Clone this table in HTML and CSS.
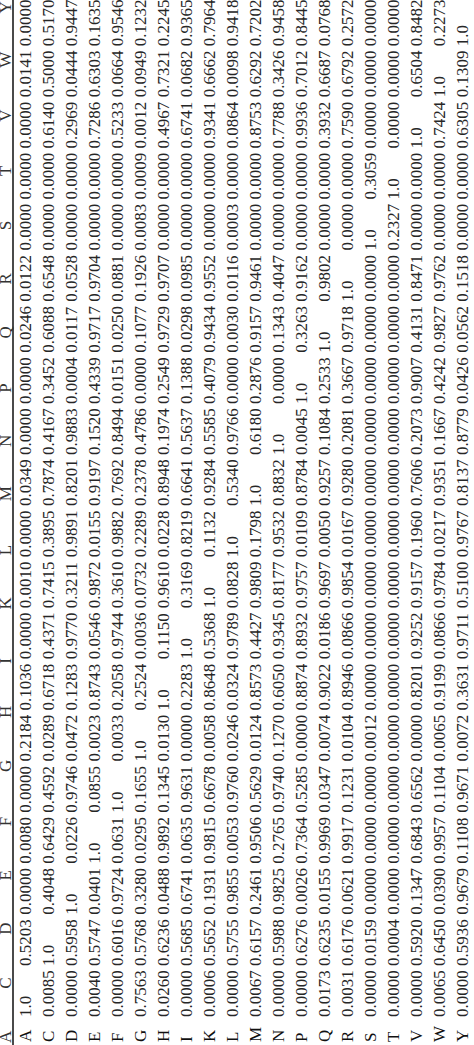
FILE: index.html
```html
<!DOCTYPE html>
<html lang="en">
<head>
<meta charset="utf-8">
<title>Similarity matrix</title>
<link rel="stylesheet" href="styles.css">
</head>
<body>
<div class="page">
  <div class="sheet">
    <div class="head">
      <span>A</span><span>C</span><span>D</span><span>E</span><span>F</span><span>G</span><span>H</span><span>I</span><span>K</span><span>L</span><span>M</span><span>N</span><span>P</span><span>Q</span><span>R</span><span>S</span><span>T</span><span>V</span><span>W</span><span>Y</span>
    </div>
    <div class="rows">
      <div class="row"><span class="lab">A</span><span>1.0</span><span>0.5203</span><span>0.0000</span><span>0.0080</span><span>0.0000</span><span>0.2184</span><span>0.1036</span><span>0.0000</span><span>0.0010</span><span>0.0000</span><span>0.0349</span><span>0.0000</span><span>0.0000</span><span>0.0246</span><span>0.0122</span><span>0.0000</span><span>0.0000</span><span>0.0000</span><span>0.0141</span><span>0.0000</span></div>
      <div class="row"><span class="lab">C</span><span>0.0085</span><span>1.0</span><span>0.4048</span><span>0.6429</span><span>0.4592</span><span>0.0289</span><span>0.6718</span><span>0.4371</span><span>0.7415</span><span>0.3895</span><span>0.7874</span><span>0.4167</span><span>0.3452</span><span>0.6088</span><span>0.6548</span><span>0.0000</span><span>0.0000</span><span>0.6140</span><span>0.5000</span><span>0.5170</span></div>
      <div class="row"><span class="lab">D</span><span>0.0000</span><span>0.5958</span><span>1.0</span><span>0.0226</span><span>0.9746</span><span>0.0472</span><span>0.1283</span><span>0.9770</span><span>0.3211</span><span>0.9891</span><span>0.8201</span><span>0.9883</span><span>0.0004</span><span>0.0117</span><span>0.0528</span><span>0.0000</span><span>0.0000</span><span>0.2969</span><span>0.0444</span><span>0.9447</span></div>
      <div class="row"><span class="lab">E</span><span>0.0040</span><span>0.5747</span><span>0.0401</span><span>1.0</span><span>0.0855</span><span>0.0023</span><span>0.8743</span><span>0.0546</span><span>0.9872</span><span>0.0155</span><span>0.9197</span><span>0.1520</span><span>0.4339</span><span>0.9717</span><span>0.9704</span><span>0.0000</span><span>0.0000</span><span>0.7286</span><span>0.6303</span><span>0.1635</span></div>
      <div class="row"><span class="lab">F</span><span>0.0000</span><span>0.6016</span><span>0.9724</span><span>0.0631</span><span>1.0</span><span>0.0033</span><span>0.2058</span><span>0.9744</span><span>0.3610</span><span>0.9882</span><span>0.7692</span><span>0.8494</span><span>0.0151</span><span>0.0250</span><span>0.0881</span><span>0.0000</span><span>0.0000</span><span>0.5233</span><span>0.0664</span><span>0.9546</span></div>
      <div class="row"><span class="lab">G</span><span>0.7563</span><span>0.5768</span><span>0.3280</span><span>0.0295</span><span>0.1655</span><span>1.0</span><span>0.2524</span><span>0.0036</span><span>0.0732</span><span>0.2289</span><span>0.2378</span><span>0.4786</span><span>0.0000</span><span>0.1077</span><span>0.1926</span><span>0.0083</span><span>0.0009</span><span>0.0012</span><span>0.0949</span><span>0.1232</span></div>
      <div class="row"><span class="lab">H</span><span>0.0260</span><span>0.6236</span><span>0.0488</span><span>0.9892</span><span>0.1345</span><span>0.0130</span><span>1.0</span><span>0.1150</span><span>0.9610</span><span>0.0228</span><span>0.8948</span><span>0.1974</span><span>0.2549</span><span>0.9729</span><span>0.9707</span><span>0.0000</span><span>0.0000</span><span>0.4967</span><span>0.7321</span><span>0.2245</span></div>
      <div class="row"><span class="lab">I</span><span>0.0000</span><span>0.5685</span><span>0.6741</span><span>0.0635</span><span>0.9631</span><span>0.0000</span><span>0.2283</span><span>1.0</span><span>0.3169</span><span>0.8219</span><span>0.6641</span><span>0.5637</span><span>0.1388</span><span>0.0298</span><span>0.0985</span><span>0.0000</span><span>0.0000</span><span>0.6741</span><span>0.0682</span><span>0.9365</span></div>
      <div class="row"><span class="lab">K</span><span>0.0006</span><span>0.5652</span><span>0.1931</span><span>0.9815</span><span>0.6678</span><span>0.0058</span><span>0.8648</span><span>0.5368</span><span>1.0</span><span>0.1132</span><span>0.9284</span><span>0.5585</span><span>0.4079</span><span>0.9434</span><span>0.9552</span><span>0.0000</span><span>0.0000</span><span>0.9341</span><span>0.6662</span><span>0.7964</span></div>
      <div class="row"><span class="lab">L</span><span>0.0000</span><span>0.5755</span><span>0.9855</span><span>0.0053</span><span>0.9760</span><span>0.0246</span><span>0.0324</span><span>0.9789</span><span>0.0828</span><span>1.0</span><span>0.5340</span><span>0.9766</span><span>0.0000</span><span>0.0030</span><span>0.0116</span><span>0.0003</span><span>0.0000</span><span>0.0864</span><span>0.0098</span><span>0.9418</span></div>
      <div class="row"><span class="lab">M</span><span>0.0067</span><span>0.6157</span><span>0.2461</span><span>0.9506</span><span>0.5629</span><span>0.0124</span><span>0.8573</span><span>0.4427</span><span>0.9809</span><span>0.1798</span><span>1.0</span><span>0.6180</span><span>0.2876</span><span>0.9157</span><span>0.9461</span><span>0.0000</span><span>0.0000</span><span>0.8753</span><span>0.6292</span><span>0.7202</span></div>
      <div class="row"><span class="lab">N</span><span>0.0000</span><span>0.5988</span><span>0.9825</span><span>0.2765</span><span>0.9740</span><span>0.1270</span><span>0.6050</span><span>0.9345</span><span>0.8177</span><span>0.9532</span><span>0.8832</span><span>1.0</span><span>0.0000</span><span>0.1343</span><span>0.4047</span><span>0.0000</span><span>0.0000</span><span>0.7788</span><span>0.3426</span><span>0.9458</span></div>
      <div class="row"><span class="lab">P</span><span>0.0000</span><span>0.6276</span><span>0.0026</span><span>0.7364</span><span>0.5285</span><span>0.0000</span><span>0.8874</span><span>0.8932</span><span>0.9757</span><span>0.0109</span><span>0.8784</span><span>0.0045</span><span>1.0</span><span>0.3263</span><span>0.9162</span><span>0.0000</span><span>0.0000</span><span>0.9936</span><span>0.7012</span><span>0.8445</span></div>
      <div class="row"><span class="lab">Q</span><span>0.0173</span><span>0.6235</span><span>0.0155</span><span>0.9969</span><span>0.0347</span><span>0.0074</span><span>0.9022</span><span>0.0186</span><span>0.9697</span><span>0.0050</span><span>0.9257</span><span>0.1084</span><span>0.2533</span><span>1.0</span><span>0.9802</span><span>0.0000</span><span>0.0000</span><span>0.3932</span><span>0.6687</span><span>0.0768</span></div>
      <div class="row"><span class="lab">R</span><span>0.0031</span><span>0.6176</span><span>0.0621</span><span>0.9917</span><span>0.1231</span><span>0.0104</span><span>0.8946</span><span>0.0866</span><span>0.9854</span><span>0.0167</span><span>0.9280</span><span>0.2081</span><span>0.3667</span><span>0.9718</span><span>1.0</span><span>0.0000</span><span>0.0000</span><span>0.7590</span><span>0.6792</span><span>0.2572</span></div>
      <div class="row"><span class="lab">S</span><span>0.0000</span><span>0.0159</span><span>0.0000</span><span>0.0000</span><span>0.0000</span><span>0.0012</span><span>0.0000</span><span>0.0000</span><span>0.0000</span><span>0.0000</span><span>0.0000</span><span>0.0000</span><span>0.0000</span><span>0.0000</span><span>0.0000</span><span>1.0</span><span>0.3059</span><span>0.0000</span><span>0.0000</span><span>0.0000</span></div>
      <div class="row"><span class="lab">T</span><span>0.0000</span><span>0.0004</span><span>0.0000</span><span>0.0000</span><span>0.0000</span><span>0.0000</span><span>0.0000</span><span>0.0000</span><span>0.0000</span><span>0.0000</span><span>0.0000</span><span>0.0000</span><span>0.0000</span><span>0.0000</span><span>0.0000</span><span>0.2327</span><span>1.0</span><span>0.0000</span><span>0.0000</span><span>0.0000</span></div>
      <div class="row"><span class="lab">V</span><span>0.0000</span><span>0.5920</span><span>0.1347</span><span>0.6843</span><span>0.6562</span><span>0.0000</span><span>0.8201</span><span>0.9252</span><span>0.9157</span><span>0.1960</span><span>0.7606</span><span>0.2073</span><span>0.9007</span><span>0.4131</span><span>0.8471</span><span>0.0000</span><span>0.0000</span><span>1.0</span><span>0.6504</span><span>0.8482</span></div>
      <div class="row"><span class="lab">W</span><span>0.0065</span><span>0.6450</span><span>0.0390</span><span>0.9957</span><span>0.1104</span><span>0.0065</span><span>0.9199</span><span>0.0866</span><span>0.9784</span><span>0.0217</span><span>0.9351</span><span>0.1667</span><span>0.4242</span><span>0.9827</span><span>0.9762</span><span>0.0000</span><span>0.0000</span><span>0.7424</span><span>1.0</span><span>0.2273</span></div>
      <div class="row"><span class="lab">Y</span><span>0.0000</span><span>0.5936</span><span>0.9679</span><span>0.1108</span><span>0.9671</span><span>0.0072</span><span>0.3631</span><span>0.9711</span><span>0.5100</span><span>0.9767</span><span>0.8137</span><span>0.8779</span><span>0.0426</span><span>0.0562</span><span>0.1518</span><span>0.0000</span><span>0.0000</span><span>0.6305</span><span>0.1309</span><span>1.0</span></div>
    </div>
  </div>
</div>
</body>
</html>
```

FILE: styles.css
```css
html, body {
  margin: 0;
  padding: 0;
  background: #ffffff;
}

.page {
  width: 474px;
  height: 1045px;
  overflow: hidden;
}

.sheet {
  width: 1045px;
  height: 474px;
  transform-origin: 0 0;
  transform: translateY(1045px) rotate(-90deg);
  font-family: "Liberation Serif", "Times New Roman", serif;
  font-size: 17px;
  color: #262626;
  white-space: nowrap;
}

.head {
  display: grid;
  grid-template-columns: repeat(20, 54.2px);
  padding-left: 2px;
  height: 12px;
  line-height: 12px;
  border-bottom: 2px solid #4a4a4a;
  color: #333333;
}

.rows {
  display: flex;
  flex-direction: column;
}

.row {
  display: grid;
  grid-template-columns: 28px repeat(20, 51.1px);
  height: 23px;
  line-height: 23px;
}

.lab {
  padding-left: 3px;
  color: #111111;
}
```
